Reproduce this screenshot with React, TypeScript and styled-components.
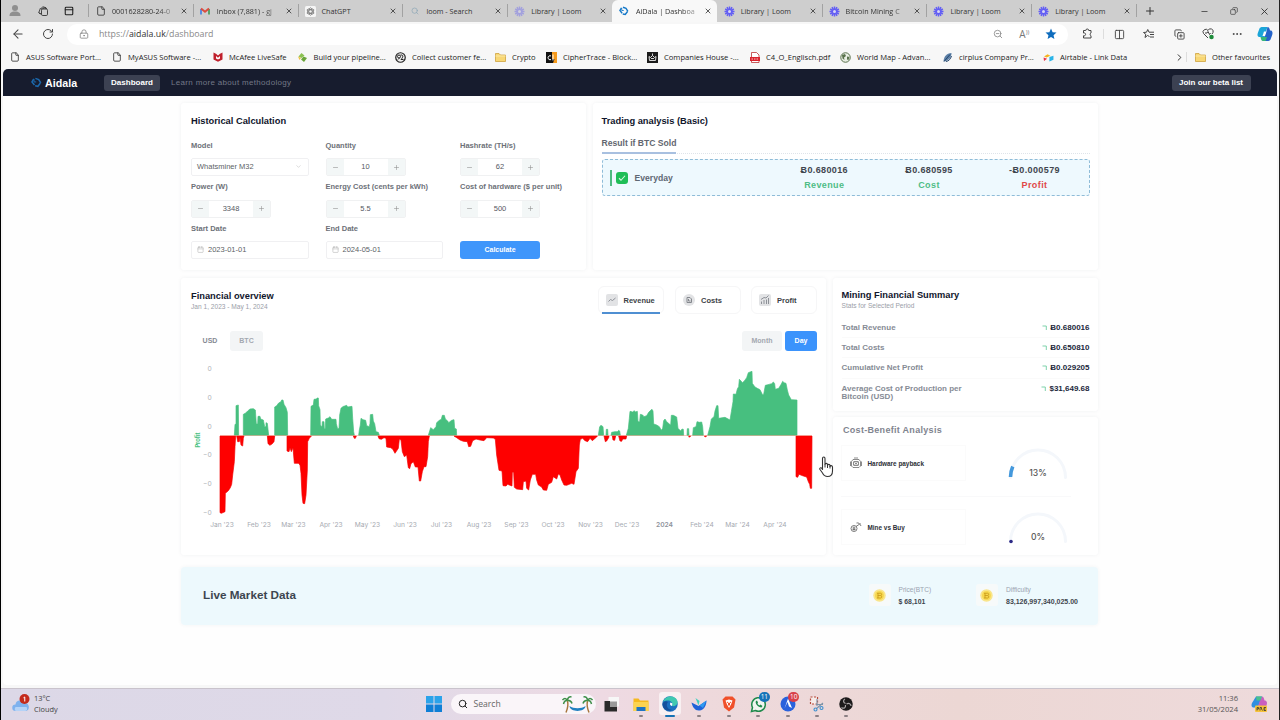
import React from "react";
import styled, { createGlobalStyle } from "styled-components";
import {
  ArrowLeft, RotateCw, LockKeyhole, ZoomOut, Columns2, MoreHorizontal,
  File, Plus, Minus, X, Copy, ChevronRight, ChevronDown, Calendar, Search, PanelTop, CopyPlus,
} from "lucide-react";

const Global = createGlobalStyle`
  * { box-sizing: border-box; }
  html, body { margin: 0; padding: 0; overflow: hidden; background: #000; }
  body { font-family: "Liberation Sans", Arial, sans-serif; }
  svg { display: block; flex: none; }
`;

const ui = `"Open Sans", "Noto Sans", sans-serif`;

/* ---------- window ---------- */
const Screen = styled.div`
  position: relative; width: 1280px; height: 720px; overflow: hidden;
  display: flex; flex-direction: column; background: #f7f7f7;
  border-left: 1px solid #000; border-right: 1px solid #222;
`;
const TabStrip = styled.div`
  height: 22px; flex: none; display: flex; background: #cecece; color: #333;
  font: 7.2px/21px ${ui};
`;
const StripLead = styled.div`
  width: 87px; display: flex; align-items: center; padding-left: 7px; gap: 15px;
`;
const Tab = styled.div<{ $active?: boolean; $line?: boolean }>`
  position: relative; width: 104.8px; height: 22px; display: flex; align-items: center;
  padding: 0 5px 0 7px; gap: 6px;
  background: ${(p) => (p.$active ? "#f8f8f8" : "transparent")};
  border-radius: 6px 6px 0 0;
  &::before {
    content: ""; position: absolute; left: 0; top: 4px; width: 1px; height: 13px;
    background: ${(p) => (p.$line ? "#a2a2a2" : "transparent")};
  }
`;
const TabIcon = styled.span`width: 11px; height: 11px; display: grid; place-items: center; flex: none;`;
const TabLabel = styled.span<{ $fade?: boolean }>`
  flex: 1; white-space: nowrap;
  mask-image: ${(p) => (p.$fade ? "linear-gradient(90deg, #000 75%, rgba(0,0,0,.25) 100%)" : "none")};
`;
const StripTail = styled.div`
  flex: 1; display: flex; align-items: center; justify-content: space-between; padding: 0 9px 0 8px;
  position: relative;
  &::before { content: ""; position: absolute; left: 0; top: 4px; width: 1px; height: 13px; background: #a2a2a2; }
`;
const WindowButtons = styled.div`display: flex; gap: 21px; align-items: center;`;
const Restore = styled(Copy)`transform: scaleX(-1);`;

const Toolbar = styled.div`height: 24px; flex: none; display: flex; align-items: center; color: #444;`;
const NavButtons = styled.div`width: 66px; display: flex; align-items: center; padding-left: 10px; gap: 17px;`;
const AddressField = styled.div`
  width: 1002px; height: 21px; border-radius: 10px; background: #fff; display: flex; align-items: center;
  padding: 0 11px 0 12px; gap: 10px; color: #888; font: 8.8px/20px ${ui};
  b { font-weight: 500; color: #333; }
`;
const Url = styled.span`flex: 1;`;
const FieldIcons = styled.div`display: flex; align-items: center; gap: 16px;`;
const ReadAloud = styled.span`font: 10px/12px ${ui}; color: #777; sup { font-size: 6px; line-height: 0; }`;
const Slot = styled.div<{ $w: number; $pl?: number }>`
  width: ${(p) => p.$w}px; padding-left: ${(p) => p.$pl ?? 0}px; display: flex; justify-content: center; align-items: center;
`;
const Rule = styled.i`width: 1px; height: 10px; background: #ddd;`;

const Bookmarks = styled.div`
  height: 23px; flex: none; display: flex; align-items: center; padding: 0 0 1px 8px;
  font: 7.6px/20px ${ui}; color: #222;
`;
const Bookmark = styled.div<{ $w: number; $ml?: number }>`
  width: ${(p) => p.$w}px; margin-left: ${(p) => p.$ml ?? 0}px;
  display: flex; align-items: center; gap: 6px; white-space: nowrap;
`;
const BookIcon = styled.span`width: 11px; height: 11px; display: grid; place-items: center; flex: none;`;

/* ---------- site ---------- */
const Site = styled.div`
  height: 616px; margin: 0 2px 0 2px; flex: none; border-radius: 5px 5px 4px 4px; overflow: hidden;
  background: #fefefe; display: flex; flex-direction: column;
`;
const SiteNav = styled.nav`
  height: 27px; flex: none; background: #171c2e; display: flex; align-items: center;
  padding: 0 26.5px 0 28px; font-size: 8px; color: #737887;
`;
const Brand = styled.div`
  width: 73px; display: flex; align-items: center; gap: 3px; color: #fff; font-weight: 700; font-size: 10.7px;
`;
const NavPill = styled.span<{ $w: number }>`
  width: ${(p) => p.$w}px; height: 16px; border-radius: 3px; background: #3c4152; color: #fff; font-weight: 700;
  display: flex; align-items: center; justify-content: center; font-size: 8px;
`;
const NavLink = styled.span`flex: 1; padding-left: 11px; letter-spacing: 0.33px; line-height: 16px;`;

const Main = styled.main`width: 917px; margin: 7px 0 0 178px; display: flex; flex-direction: column;`;
const Row = styled.div<{ $gap?: number; $mt?: number }>`
  display: flex; gap: ${(p) => p.$gap ?? 7}px; margin-top: ${(p) => p.$mt ?? 0}px;
`;
const Column = styled.div`display: flex; flex-direction: column; gap: 6px;`;
const Card = styled.section<{ $w: number; $h: number; $pad: string }>`
  width: ${(p) => p.$w}px; height: ${(p) => p.$h}px; padding: ${(p) => p.$pad};
  background: #fff; border-radius: 3px; box-shadow: 0 0 4px rgba(40, 50, 70, 0.06);
`;
const Title = styled.h2<{ $mt?: number }>`
  margin: ${(p) => p.$mt ?? 0}px 0 0; font-size: 9.3px; line-height: 12px; font-weight: 700; color: #10162c; white-space: nowrap;
`;
const Sub = styled.div<{ $mb?: number }>`
  margin-bottom: ${(p) => p.$mb ?? 0}px; font-size: 6.6px; line-height: 9px; color: #9a9ea8; white-space: nowrap;
`;

const FormGrid = styled.div`
  margin-top: 13px; display: grid; grid-template-columns: 134.5px 134.5px 120px; row-gap: 5px;
`;
const FieldLabel = styled.div`
  height: 12px; margin-bottom: 6.5px; line-height: 12px; font-size: 7.5px; font-weight: 700; color: #6d7178; white-space: nowrap;
`;
const Box = styled.div`
  width: 117.5px; height: 18px; border: 1px solid #f0f0f2; border-radius: 2px; display: flex; align-items: center;
  padding: 0 6px 1px 5px; gap: 4px; font-size: 7.5px; color: #5c5f66;
  & > span { flex: 1; }
`;
const Stepper = styled.div`
  width: 80px; height: 18px; border: 1px solid #f0f1f2; border-radius: 2px; display: grid;
  grid-template-columns: 17px 1fr 17px; font-size: 7.5px; line-height: 15.500px; text-align: center; color: #55585f;
`;
const StepButton = styled.span`background: #f3f7f7; color: #909090; display: grid; place-items: center;`;
const Calculate = styled.button`
  width: 80px; height: 18px; margin-top: 18px; padding: 0; border: 0; border-radius: 3px; background: #3f96fb;
  color: #fff; font: 700 7px/18px "Liberation Sans", Arial, sans-serif;
`;

const ResultTabs = styled.div`
  height: 19px; margin-top: 8px; border-bottom: 1px dotted #dfe4ea; display: flex;
`;
const ResultTab = styled.div`
  height: 19px; line-height: 16px; font-size: 8.6px; font-weight: 700; color: #62666f; border-bottom: 2px solid #a8c0e0;
`;
const Strategy = styled.div`
  height: 37px; margin-top: 5px; border: 1px dashed #8fbcd8; border-radius: 3px; background: #eef9fe;
  display: grid; grid-template-columns: 169.500px 104.500px 105px 106px; align-items: center;
`;
const StrategyName = styled.div`
  display: flex; align-items: center; font-size: 8.6px; font-weight: 700; color: #5f6874; padding-left: 7.500px;
  &::before { content: ""; width: 1.500px; height: 16px; background: #4dbb80; margin-right: 4px; }
`;
const Check = styled.span`
  width: 12px; height: 12px; border-radius: 3px; background: #1fbe57; display: grid; place-items: center; margin-right: 7px;
`;
const Metric = styled.div<{ $tone: string }>`
  text-align: center; font-size: 9px; line-height: 14.500px; font-weight: 700; letter-spacing: 0.38px; color: #41464f;
  em { display: block; font-style: normal; color: ${(p) => p.$tone}; }
`;

const Between = styled.div`display: flex; justify-content: space-between; align-items: flex-start;`;
const Kinds = styled.div`display: flex; gap: 10px;`;
const Kind = styled.div<{ $on?: boolean }>`
  position: relative; width: 66px; height: 28px; margin-right: ${(p) => (p.$on ? 1.5 : 0)}px;
  border: 1px solid #f6f6f7; border-radius: 6px; display: flex; align-items: center;
  gap: 6px; padding-left: 7px; font-size: 7.5px; font-weight: 700; color: #3c3f46;
  &::after {
    content: ""; position: absolute; left: 3px; right: 3px; bottom: -1px; height: 2px;
    background: ${(p) => (p.$on ? "#4f8fd2" : "transparent")};
  }
`;
const KindIcon = styled.span<{ $round?: boolean }>`
  width: 12px; height: 12px; border-radius: ${(p) => (p.$round ? "50%" : "2px")}; background: #e2e3e5;
  display: grid; place-items: center;
`;
const Toggle = styled.span<{ $w: number; $kind: "plain" | "soft" | "primary" }>`
  width: ${(p) => p.$w}px; height: 20.5px; border-radius: 3px; display: grid; place-items: center;
  font-size: 7px; font-weight: 700;
  background: ${(p) => ({ plain: "transparent", soft: "#f3f5f6", primary: "#3b93fc" })[p.$kind]};
  color: ${(p) => ({ plain: "#858a93", soft: "#a3a8b0", primary: "#fff" })[p.$kind]};
`;
const ToggleRow = styled.div`display: flex; justify-content: space-between; margin-top: 16.500px; padding: 0 0 0 1px;`;
const ToggleGroup = styled.div<{ $gap: number }>`display: flex; gap: ${(p) => p.$gap}px;`;
const ChartSvg = styled.svg`margin: 5px 0 0 -1px; text { font-family: Inter, sans-serif; }`;

const StatRow = styled.div<{ $last?: boolean }>`
  height: ${(p) => (p.$last ? 24 : 20.4)}px; display: flex; justify-content: space-between; padding-top: 6px;
  font-size: 8px; line-height: 8.4px; font-weight: 700; color: #868b95;
  border-bottom: 1px solid ${(p) => (p.$last ? "transparent" : "#fafafa")};
`;
const StatValue = styled.span`display: flex; gap: 3px; color: #22283c; white-space: nowrap;`;
const BenefitTitle = styled.h3`
  margin: 0 0 0 2px; font-size: 9px; line-height: 12px; letter-spacing: 0.3px; font-weight: 700; color: #7f848f;
`;
const Benefit = styled.div<{ $h: number; $mt: number; $line?: boolean }>`
  height: ${(p) => p.$h}px; margin-top: ${(p) => p.$mt}px; display: flex; justify-content: space-between;
  border-bottom: 1px solid ${(p) => (p.$line ? "#f9f9fa" : "transparent")};
`;
const BenefitBox = styled.div`
  width: 125px; height: 36px; border: 1px solid #fbfbfb; display: flex; align-items: center; gap: 5.500px; padding-left: 8px;
  font-size: 6.4px; font-weight: 700; color: #2c2f36;
`;
const GaugeSvg = styled.svg`margin-top: 1.500px;`;
const Live = styled.section`
  height: 58px; margin-top: 12px; border-radius: 4px; background: #edf9fd; display: flex; align-items: center;
  padding: 0 20px 2px 22px; box-shadow: 0 0 4px rgba(40, 50, 70, 0.05);
`;
const LiveTitle = styled.h2`margin: 0; flex: 1; font-size: 11.7px; line-height: 14px; color: #3d4650;`;
const Quote = styled.div<{ $w: number }>`width: ${(p) => p.$w}px; display: flex; align-items: center; gap: 8px;`;
const Coin = styled.span`
  width: 22px; height: 22px; border-radius: 3px; background: #f7fafa; display: grid; place-items: center;
`;
const QuoteText = styled.div<{ $size: number }>`
  padding-top: 1px; font-size: 6.6px; line-height: 12px; color: #9ba3b0; white-space: nowrap;
  b { display: block; font-size: ${(p) => p.$size}px; color: #3f464e; }
`;

/* ---------- taskbar ---------- */
const Taskbar = styled.footer`
  height: 32px; margin-top: 3px; flex: none; border-top: 1px solid #c9c3cc; display: flex; align-items: center; color: #444;
  padding-bottom: 1px;
  background: linear-gradient(90deg, #dcd8e7 0%, #dfd9e8 30%, #eedae3 47%, #eed9dc 55%, #ecd7d4 75%, #eedadb 100%);
  font-family: ${ui};
`;
const Weather = styled.div`
  width: 424.500px; display: flex; align-items: center; padding: 0 0 1px 11px; gap: 4px; font-size: 7.4px; line-height: 11px;
`;
const SearchPill = styled.div`
  width: 145px; height: 20px; margin-left: 9px; border-radius: 10px; background: #faf5f9; display: flex; align-items: center;
  padding: 0 3px 0 7px; gap: 6px; font-size: 8.6px; color: #666; span { flex: 1; }
`;
const Apps = styled.div`flex: 1; display: flex; padding-left: 1px;`;
const AppButton = styled.div<{ $hot?: boolean; $dot?: boolean }>`
  position: relative; width: 29.4px; height: 30px; display: grid; place-items: center;
  &::before {
    content: ""; position: absolute; left: 4px; top: 3px; width: 22px; height: 23px; border-radius: 3px;
    background: ${(p) => (p.$hot ? "rgba(255,255,255,.6)" : "transparent")};
  }
  &::after {
    content: ""; position: absolute; left: 50%; bottom: 2px; height: 2px; border-radius: 1px; transform: translateX(-50%);
    width: ${(p) => (p.$hot ? 10 : 4)}px; background: ${(p) => (p.$hot ? "#1672b4" : p.$dot ? "#8b8084" : "transparent")};
  }
  svg { position: relative; }
`;
const Badge = styled.span<{ $bg: string }>`
  position: absolute; right: 3px; top: 3px; min-width: 11px; height: 10px; border-radius: 5px; background: ${(p) => p.$bg};
  color: #fff; font-size: 6.5px; line-height: 10px; text-align: center;
`;
const Clock = styled.div`text-align: right; font-size: 7.6px; line-height: 11px; padding-bottom: 1px; margin-right: 13px; color: #555;`;
const Tray = styled.div`margin-right: 11px;`;
const Cursor = styled.svg`position: absolute; left: 816.500px; top: 456px;`;

/* ---------- drawings ---------- */
const Avatar = () => (
  <svg width="14" height="14" viewBox="0 0 28 28"><circle cx="14" cy="8" r="6" fill="#8f8f8f" /><path d="M3 24c0-6 3-9 11-9s11 3 11 9z" fill="#8f8f8f" /></svg>
);
const Workspaces = () => (
  <svg width="12" height="12" viewBox="0 0 24 24" fill="none" stroke="#333" strokeWidth="1.800">
    <rect x="9" y="8" width="12" height="13" rx="2.500" /><path d="M9 18l-4-1.500a2 2 0 01-1-2.500L7 6M7 18l-4-3M9 9l1-4c.4-1 1.400-1.600 2.500-1.300L18 5.500l1 2.500M12 8V6h6v2" />
  </svg>
);
const PuzzleIcon = () => (
  <svg width="12" height="12" viewBox="0 0 24 24" fill="none" stroke="#444" strokeWidth="2">
    <path d="M5 5h4.500a3 3 0 016 0H20v5a3 3 0 000 5.500V20H5v-4.500a3 3 0 100-5.500z" />
  </svg>
);
const LoomIcon = ({ faint }: { faint?: boolean }) => (
  <svg width="11" height="11" viewBox="-11 -11 22 22" opacity={faint ? 0.4 : 1}>
    {[0, 30, 60, 90, 120, 150].map((a) => (
      <line key={a} y1="-10" y2="10" stroke="#625df5" strokeWidth="3" transform={`rotate(${a})`} />
    ))}
    <circle r="5.5" fill="#625df5" /><circle r="3" fill="#d8d6f4" />
  </svg>
);
const AidalaIcon = ({ size = 10, color = "#1478c8" }: { size?: number; color?: string }) => (
  <svg width={size} height={size} viewBox="0 0 20 20" fill="none" stroke={color} strokeWidth="2.800">
    <path d="M5 3.500 1.800 9l4.500 5.500M8 2.500l6 2.200 3.800 6M17 11l-4.500 6-5-1" />
    <path d="M5.500 4v5h4" strokeWidth="1.800" />
  </svg>
);
const GmailIcon = () => (
  <svg width="10" height="8" viewBox="0 0 20 16" fill="none" strokeWidth="4">
    <path d="M2 15V4" stroke="#5a8de0" /><path d="M18 15V4" stroke="#5aa36a" /><path d="M2 3l8 6.500L18 3" stroke="#dd4b3e" />
  </svg>
);
const GptIcon = () => (
  <svg width="11" height="11" viewBox="-11 -11 22 22"><rect x="-11" y="-11" width="22" height="22" rx="3" fill="#f5f5f5" />
    {[0, 60, 120].map((a) => <ellipse key={a} rx="3.400" ry="7.500" fill="none" stroke="#777" strokeWidth="1.600" transform={`rotate(${a})`} />)}
  </svg>
);
const FolderIcon = () => (
  <svg width="11" height="10" viewBox="0 0 22 20"><path d="M1 3h7l3 3h10v13H1z" fill="#f8d775" stroke="#c99a2e" strokeWidth="1.400" /><path d="M1 8h20" stroke="#fbe9a8" strokeWidth="2" /></svg>
);
const FileIcon = () => <File size={10} strokeWidth={2} color="#333" />;
const McAfeeIcon = () => (
  <svg width="10" height="10" viewBox="0 0 20 20"><path d="M1 1l5 2.500L10 7l4-3.500L19 1v14l-9 4.500L1 15z" fill="#c0202c" /><path d="M6 8l4 3.500L14 8v5l-4 2-4-2z" fill="#fff" /></svg>
);
const PipelineIcon = () => (
  <svg width="11" height="11" viewBox="0 0 22 22"><path d="M9 2l6 5-6 5-6-3z" fill="#8cc152" /><path d="M13 9l7 3-6 8-6-5z" fill="#6aa53a" /><path d="M2 9l6 3-3 4z" fill="#f0c040" /></svg>
);
const CollectIcon = () => (
  <svg width="11" height="11" viewBox="0 0 22 22"><circle cx="11" cy="11" r="9.500" fill="#eee" stroke="#222" strokeWidth="2.400" /><circle cx="8" cy="9" r="3" fill="none" stroke="#222" strokeWidth="2" /><path d="M11 6c6-1 6 4 1 9h5M6 15l3-3" fill="none" stroke="#222" strokeWidth="2" /></svg>
);
const CipherIcon = () => (
  <svg width="11" height="11" viewBox="0 0 22 22"><rect width="22" height="22" fill="#111" /><path d="M12 0h10v22h-8l3-8h-5z" fill="#f59a1c" /><path d="M10 8a4 4 0 100 7M14 5v12" fill="none" stroke="#fff" strokeWidth="2" /></svg>
);
const HouseIcon = () => (
  <svg width="11" height="11" viewBox="0 0 22 22"><rect width="22" height="22" fill="#1c1c1c" /><path d="M4 9l3 2 4-4 4 4 3-2-1 8H5z" fill="none" stroke="#eee" strokeWidth="1.800" /><path d="M11 3v4M8 13h6" stroke="#eee" strokeWidth="1.800" /></svg>
);
const PdfIcon = () => (
  <svg width="10" height="11" viewBox="0 0 20 22"><path d="M3 1h10l5 5v15H3z" fill="#fff" stroke="#b33" strokeWidth="1.600" /><rect y="10" width="20" height="8" fill="#d9232e" /><path d="M3 14h14" stroke="#fbb" strokeWidth="2" strokeDasharray="3 2" /></svg>
);
const WorldIcon = () => (
  <svg width="11" height="11" viewBox="0 0 22 22"><circle cx="11" cy="11" r="9.500" fill="#e9eee4" stroke="#58714b" strokeWidth="2" /><path d="M4 6l6-2 2 4-4 3 1 5-4-3zM14 9l5 1-2 6-3-1z" fill="#58714b" /></svg>
);
const CirplusIcon = () => (
  <svg width="11" height="11" viewBox="0 0 22 22"><path d="M3 18C4 9 9 3 19 2c0 8-5 14-13 17z" fill="#5b7fa6" /><path d="M4 19L16 5M8 19c6-1 9-5 11-11" stroke="#27476d" strokeWidth="2" fill="none" /></svg>
);
const AirtableIcon = () => (
  <svg width="11" height="9" viewBox="0 0 24 20"><path d="M2 8l8-5 6 3-8 4z" fill="#f7b520" /><path d="M14 9l9-3v9l-9 4z" fill="#2ab4e8" /><path d="M1 10l8 3-7 5z" fill="#e8344c" /></svg>
);
const BookList = [
  { icon: <FileIcon />, label: "ASUS Software Port...", w: 102 },
  { icon: <FileIcon />, label: "MyASUS Software -...", w: 101 },
  { icon: <McAfeeIcon />, label: "McAfee LiveSafe", w: 84.5 },
  { icon: <PipelineIcon />, label: "Build your pipeline...", w: 98.5 },
  { icon: <CollectIcon />, label: "Collect customer fe...", w: 100 },
  { icon: <FolderIcon />, label: "Crypto", w: 51 },
  { icon: <CipherIcon />, label: "CipherTrace - Block...", w: 101 },
  { icon: <HouseIcon />, label: "Companies House -...", w: 102 },
  { icon: <PdfIcon />, label: "C4_O_Englisch.pdf", w: 91 },
  { icon: <WorldIcon />, label: "World Map - Advan...", w: 102 },
  { icon: <CirplusIcon />, label: "cirplus Company Pr...", w: 101 },
  { icon: <AirtableIcon />, label: "Airtable - Link Data", w: 130 },
];
const TabList = [
  { icon: <FileIcon />, label: "0001628280-24-0", line: true, fade: true },
  { icon: <GmailIcon />, label: "Inbox (7,881) - gj", line: true, fade: true },
  { icon: <GptIcon />, label: "ChatGPT", line: true },
  { icon: <Search size={8} color="#8aa5b5" />, label: "loom - Search", line: true },
  { icon: <LoomIcon faint />, label: "Library | Loom", line: true },
  { icon: <AidalaIcon />, label: "AiDala | Dashboa", active: true, fade: true },
  { icon: <LoomIcon />, label: "Library | Loom" },
  { icon: <LoomIcon />, label: "Bitcoin Mining C", line: true, fade: true },
  { icon: <LoomIcon />, label: "Library | Loom", line: true },
  { icon: <LoomIcon />, label: "Library | Loom", line: true },
];

/* Outlines are in thirds of a pixel; the zero line sits at 482. */
const gains = [
  "163,481 165,448 168,448 168,392 175,390 176,481",
  "190,481 190,418 196,415 203,408 210,402 220,401 226,405 229,447 233,447 234,424 240,424 242,432 250,435 254,455 258,455 258,443 262,445 266,481",
  "284,481 284,396 290,392 296,384 303,380 305,375 309,375 312,388 318,398 322,412 323,481",
  "392,481 393,394 400,390 402,373 410,372 411,369 415,369 416,392 420,404 421,450 426,456 427,440 432,440 433,462 436,460 437,432 445,429 450,425 455,433 468,433 469,446 473,462 477,460 479,420 483,400 488,395 500,391 503,396 516,394 518,430 521,470 523,481",
  "536,481 538,465 541,450 543,430 549,434 557,436 560,452 568,455 570,445 571,419 578,418 580,438 584,446 588,470 595,472 598,481",
  "745,481 749,468 752,458 760,464 768,455 770,443 778,436 784,433 787,421 793,421 796,432 803,438 806,443 815,436 822,434 824,460 829,462 830,481",
  "1255,481 1259,455 1263,451 1269,455 1271,481",
  "1278,481 1279,463 1283,463 1284,481",
  "1293,481 1295,472 1305,470 1312,470 1316,466 1319,468 1321,481",
  "1339,481 1345,460 1348,430 1350,409 1358,411 1363,407 1366,411 1372,409 1374,440 1379,440 1381,418 1388,420 1392,425 1400,422 1406,412 1412,406 1416,403 1419,408 1421,447 1430,450 1438,455 1444,466 1448,460 1451,437 1455,432 1460,440 1468,447 1472,450 1474,421 1480,421 1490,426 1494,460 1502,468 1506,462 1510,463 1511,481",
  "1521,481 1522,461 1526,461 1527,481",
  "1538,481 1540,458 1548,455 1551,440 1558,442 1565,441 1568,455 1570,481",
  "1583,481 1590,455 1594,432 1602,425 1605,408 1610,392 1614,392 1616,430 1635,427 1650,435 1654,410 1659,380 1660,357 1668,358 1672,342 1676,335 1678,313 1683,318 1687,323 1693,318 1700,308 1705,293 1716,289 1717,325 1725,336 1732,340 1740,344 1748,360 1751,358 1756,331 1764,329 1775,326 1780,321 1784,326 1786,343 1796,340 1804,327 1808,319 1812,323 1818,325 1822,345 1826,360 1834,374 1851,375 1851,481",
];
const losses = [
  "120,483 120,713 124,715 135,710 136,655 145,647 151,638 155,628 158,600 163,560 165,515 167,483",
  "170,483 173,500 178,500 180,488 183,510 188,513 190,490 192,483",
  "262,483 264,505 269,511 276,507 282,500 284,483",
  "321,483 321,528 327,530 330,518 334,530 339,518 343,565 355,565 360,570 363,595 366,660 369,685 374,686 378,660 382,585 383,500 388,490 394,483",
  "520,483 523,490 526,490 529,483",
  "594,483 597,491 604,493 612,488 618,490 620,516 632,518 638,522 645,535 655,520 658,492 663,495 667,530 673,545 680,540 685,578 689,581 693,566 700,560 706,576 714,576 718,618 722,618 727,590 732,575 738,575 743,545 745,500 748,483",
  "822,483 830,488 840,495 850,499 862,500 866,515 872,514 878,497 888,492 900,495 912,497 920,488 940,489 946,493 950,540 957,586 966,588 969,632 978,633 983,628 996,633 997,592 1001,592 1003,637 1010,642 1028,644 1030,620 1038,618 1040,640 1046,645 1051,615 1057,598 1067,598 1070,615 1075,630 1085,636 1090,645 1100,646 1105,628 1115,622 1120,605 1130,612 1135,597 1140,600 1145,615 1152,630 1160,631 1175,625 1182,628 1188,590 1195,580 1198,510 1201,493 1208,490 1215,497 1223,500 1230,490 1237,497 1250,486 1252,483",
  "1272,483 1276,500 1280,498 1286,488 1287,483",
  "1297,483 1299,495 1304,496 1307,483",
  "1316,483 1320,498 1325,499 1328,492 1338,492 1340,483",
  "1526,483 1528,487 1532,483",
  "1573,483 1576,486 1580,483",
  "1848,483 1848,605 1853,607 1857,598 1870,603 1880,606 1885,620 1889,628 1891,640 1895,640 1896,483",
];
const months: [number, string][] = [
  [222, "Jan '23"], [259, "Feb '23"], [293.5, "Mar '23"], [331, "Apr '23"], [367.5, "May '23"], [405, "Jun '23"],
  [441.5, "Jul '23"], [479, "Aug '23"], [516.5, "Sep '23"], [553, "Oct '23"], [590.5, "Nov '23"], [627, "Dec '23"],
  [664.5, "2024"], [702, "Feb '24"], [737.5, "Mar '24"], [775, "Apr '24"],
];
const levels: [number, string][] = [[282, "0"], [368, "0"], [454, "0"], [540, "−0"], [626, "−0"], [712, "−0"]];

const Chart = () => (
  <ChartSvg width="630" height="190" viewBox="30 243 1890 570">
    <g fill="#47bf7f" stroke="#47bf7f" strokeWidth="2" strokeLinejoin="round">{gains.map((p) => <polygon key={p} points={p} />)}</g>
    <g fill="#fe0000" stroke="#f20000" strokeWidth="2" strokeLinejoin="round">{losses.map((p) => <polygon key={p} points={p} />)}</g>
    <path d="M120 482H1896" stroke="#f08a70" strokeWidth="2" opacity=".8" />
    {levels.map(([y, t]) => <text key={y} x="95" y={y + 7} textAnchor="end" fontSize="20" fill="#b0b3b8">{t}</text>)}
    {months.map(([x, t]) => (
      <text key={x} x={(x - 180) * 3} y="757" textAnchor="middle" fontSize="20" fill={t === "2024" ? "#8d929b" : "#a6aab1"}
        fontWeight={t === "2024" ? 600 : 400}>{t}</text>
    ))}
    <text transform="translate(59 495) rotate(-90)" textAnchor="middle" fontSize="17" fontWeight="700" fill="#47bf7f">Profit</text>
  </ChartSvg>
);

const Gauge = ({ value }: { value: number }) => {
  const a = Math.PI * (value / 100);
  return (
    <GaugeSvg width="64" height="34" viewBox="0 0 64 34">
      <path d="M3.500 30.500A27.500 27.500 0 0 1 58.500 30.500" fill="none" stroke="#f4f7fb" strokeWidth="3" strokeLinecap="round" />
      {value > 0 ? (
        <path d={`M3.500 30A27.500 27.500 0 0 1 ${31 - 27.5 * Math.cos(a)} ${30.5 - 27.5 * Math.sin(a)}`} fill="none" stroke="#4398dc" strokeWidth="3.600" />
      ) : <circle cx="4" cy="30.500" r="1.800" fill="#2d2a86" />}
      <text x="31" y="29" textAnchor="middle" fontFamily="Inter, sans-serif" fontSize="8.600" fontWeight="500" fill="#555">{value}%</text>
    </GaugeSvg>
  );
};

const CornerArrow = () => (
  <svg width="5" height="8" viewBox="0 0 5 8"><path d="M.500 2H4.300V6" fill="none" stroke="#6fcda2" strokeWidth=".9" /></svg>
);
const Bitcoin = () => (
  <svg width="13" height="13" viewBox="0 0 26 26"><circle cx="13" cy="13" r="12.500" fill="#f9e58b" /><circle cx="13" cy="13" r="9" fill="#f7d84f" />
    <path d="M8 8.500h7.500a2.300 2.300 0 010 4.500H9.500m6 0a2.600 2.600 0 010 5H8M10 8.500v9.500" fill="none" stroke="#c99a1a" strokeWidth="1.700" /></svg>
);

const NumberField = ({ label, value }: { label: string; value: string }) => (
  <div>
    <FieldLabel>{label}</FieldLabel>
    <Stepper>
      <StepButton><Minus size={7} /></StepButton>{value}<StepButton><Plus size={7} /></StepButton>
    </Stepper>
  </div>
);
const DateField = ({ label, value }: { label: string; value: string }) => (
  <div><FieldLabel>{label}</FieldLabel><Box><Calendar size={7} color="#b5b5b5" /><span>{value}</span></Box></div>
);

export default function App() {
  return (
    <Screen>
      <Global />
      <TabStrip>
        <StripLead>
          <Avatar />
          <Workspaces />
          <PanelTop size={10} color="#222" strokeWidth={2.6} />
        </StripLead>
        {TabList.map((t, i) => (
          <Tab key={i} $active={t.active} $line={t.line}>
            <TabIcon>{t.icon}</TabIcon><TabLabel $fade={t.fade}>{t.label}</TabLabel><X size={8} color="#333" strokeWidth={2.4} />
          </Tab>
        ))}
        <StripTail>
          <Plus size={12} color="#333" />
          <WindowButtons><Minus size={9} /><Restore size={8} /><X size={11} /></WindowButtons>
        </StripTail>
      </TabStrip>

      <Toolbar>
        <NavButtons><ArrowLeft size={14} strokeWidth={1.8} /><RotateCw size={12} strokeWidth={2} /></NavButtons>
        <AddressField>
          <LockKeyhole size={10} />
          <Url>https://<b>aidala.uk</b>/dashboard</Url>
          <FieldIcons>
            <ZoomOut size={10} />
            <ReadAloud>A<sup>))</sup></ReadAloud>
            <svg width="12" height="12" viewBox="0 0 24 24"><path d="M12 1l3.200 7.300 7.800.8-5.900 5.300 1.700 7.800L12 18.200 5.200 22.200l1.700-7.800L1 9.100l7.800-.8z" fill="#0f6cbd" /></svg>
          </FieldIcons>
        </AddressField>
        <Slot $w={35} $pl={3}><PuzzleIcon /></Slot>
        <Rule />
        <Slot $w={30}><Columns2 size={11} /></Slot>
        <Slot $w={30}>
          <svg width="12" height="11" viewBox="0 0 24 22" fill="none" stroke="#444" strokeWidth="2"><path d="M13 15l-4-2-5 4 1.500-6.500L1 7l6-.6L9.500 1 12 6.400h10M14 11h8M14 16h8" /></svg>
        </Slot>
        <Slot $w={30}><CopyPlus size={11} /></Slot>
        <Slot $w={29}>
          <svg width="13" height="12" viewBox="0 0 26 24"><path d="M12 20L3 11a5 5 0 019-6 5 5 0 0110 4l-2 3M6 10h4l2-3 3 6 2-3" fill="none" stroke="#444" strokeWidth="2" /><circle cx="19" cy="18" r="4.500" fill="#1e8b3a" /></svg>
        </Slot>
        <Slot $w={28}><MoreHorizontal size={12} /></Slot>
        <Slot $w={28}>
          <svg width="16" height="16" viewBox="0 0 32 32"><path d="M11 2h10l-7 20H6c-5 0-6-4-4-9l3-8c1-2 3-3 6-3z" fill="#1ba5d8" /><path d="M21 2c3 0 4 3 5 7h2c3 1 4 5 2 10l-3 8c-1 2-4 3-6 3H11l8-20z" fill="#2463c9" /><path d="M10 22h10l-3 8h-5c-3 0-4-3-5-8z" fill="#35b778" /><path d="M14 11h5l-3 9h-5z" fill="#fff" /></svg>
        </Slot>
      </Toolbar>

      <Bookmarks>
        {BookList.map((b) => <Bookmark key={b.label} $w={b.w}><BookIcon>{b.icon}</BookIcon>{b.label}</Bookmark>)}
        <Slot $w={13}><ChevronRight size={11} /></Slot>
        <Rule />
        <Bookmark $w={80} $ml={8}><BookIcon><FolderIcon /></BookIcon>Other favourites</Bookmark>
      </Bookmarks>

      <Site>
        <SiteNav>
          <Brand><AidalaIcon size={11} color="#1b69ad" />Aidala</Brand>
          <NavPill $w={56}>Dashboard</NavPill>
          <NavLink>Learn more about methodology</NavLink>
          <NavPill $w={79}>Join our beta list</NavPill>
        </SiteNav>

        <Main>
          <Row>
            <Card $w={405} $h={167} $pad="11.500px 0 0 10px">
              <Title>Historical Calculation</Title>
              <FormGrid>
                <div>
                  <FieldLabel>Model</FieldLabel>
                  <Box><span>Whatsminer M32</span><ChevronDown size={7} color="#c4c4c4" /></Box>
                </div>
                <NumberField label="Quantity" value="10" />
                <NumberField label="Hashrate (TH/s)" value="62" />
                <NumberField label="Power (W)" value="3348" />
                <NumberField label="Energy Cost (cents per kWh)" value="5.5" />
                <NumberField label="Cost of hardware ($ per unit)" value="500" />
                <DateField label="Start Date" value="2023-01-01" />
                <DateField label="End Date" value="2024-05-01" />
                <Calculate>Calculate</Calculate>
              </FormGrid>
            </Card>
            <Card $w={505} $h={167} $pad="12px 8.500px 0 8.500px">
              <Title>Trading analysis (Basic)</Title>
              <ResultTabs><ResultTab>Result if BTC Sold</ResultTab></ResultTabs>
              <Strategy>
                <StrategyName>
                  <Check><svg width="8" height="8" viewBox="0 0 16 16"><path d="M2 8.500l4 4 8-9" fill="none" stroke="#d9f7e3" strokeWidth="2.200" /></svg></Check>
                  Everyday
                </StrategyName>
                <Metric $tone="#4fbd86">Ƀ0.680016<em>Revenue</em></Metric>
                <Metric $tone="#4fbd86">Ƀ0.680595<em>Cost</em></Metric>
                <Metric $tone="#e04848">-Ƀ0.000579<em>Profit</em></Metric>
              </Strategy>
            </Card>
          </Row>

          <Row $mt={8}>
            <Card $w={645} $h={277} $pad="8px 9px 0 10px">
              <Between>
                <div><Title $mt={4}>Financial overview</Title><Sub>Jan 1, 2023 - May 1, 2024</Sub></div>
                <Kinds>
                  <Kind $on>
                    <KindIcon><svg width="8" height="8" viewBox="0 0 16 16"><path d="M1 11l4-4 4 2 6-5" fill="none" stroke="#85888e" strokeWidth="1.800" /></svg></KindIcon>Revenue
                  </Kind>
                  <Kind>
                    <KindIcon $round><svg width="8" height="8" viewBox="0 0 16 16"><path d="M4 3h6l3 3v7H4zM7 6v4h4" fill="none" stroke="#85888e" strokeWidth="2" /></svg></KindIcon>Costs
                  </Kind>
                  <Kind>
                    <KindIcon><svg width="10" height="10" viewBox="0 0 20 20"><path d="M3 18v-5M8 18v-8M13 18V9M17 18V6M2 9l6-4 4 1 5-5" fill="none" stroke="#85888e" strokeWidth="1.800" /></svg></KindIcon>Profit
                  </Kind>
                </Kinds>
              </Between>
              <ToggleRow>
                <ToggleGroup $gap={2}><Toggle $w={36} $kind="plain">USD</Toggle><Toggle $w={33} $kind="soft">BTC</Toggle></ToggleGroup>
                <ToggleGroup $gap={3}><Toggle $w={40} $kind="soft">Month</Toggle><Toggle $w={32} $kind="primary">Day</Toggle></ToggleGroup>
              </ToggleRow>
              <Chart />
            </Card>
            <Column>
              <Card $w={265} $h={133} $pad="10.500px 8.500px 0 8.500px">
                <Title>Mining Financial Summary</Title>
                <Sub $mb={8}>Stats for Selected Period</Sub>
                <StatRow>Total Revenue<StatValue><CornerArrow />Ƀ0.680016</StatValue></StatRow>
                <StatRow>Total Costs<StatValue><CornerArrow />Ƀ0.650810</StatValue></StatRow>
                <StatRow>Cumulative Net Profit<StatValue><CornerArrow />Ƀ0.029205</StatValue></StatRow>
                <StatRow $last><span>Average Cost of Production per<br />Bitcoin (USD)</span><StatValue><CornerArrow />$31,649.68</StatValue></StatRow>
              </Card>
              <Card $w={265} $h={138} $pad="7px 27px 0 8px">
                <BenefitTitle>Cost-Benefit Analysis</BenefitTitle>
                <Benefit $h={52} $mt={9} $line>
                  <BenefitBox>
                    <svg width="12" height="12" viewBox="0 0 24 24" fill="none" stroke="#666" strokeWidth="1.500"><path d="M6 5h12l3 4v9l-3 3H6l-3-3V9zM8 2h8M1 9v9M23 9v9" /><rect x="7" y="9" width="10" height="8" rx="1" /><path d="M9 11l6 4M15 11l-6 4" /></svg>
                    Hardware payback
                  </BenefitBox>
                  <Gauge value={13} />
                </Benefit>
                <Benefit $h={40} $mt={12}>
                  <BenefitBox>
                    <svg width="12" height="12" viewBox="0 0 24 24" fill="none" stroke="#666" strokeWidth="1.700"><circle cx="8" cy="15" r="6" /><path d="M5 14h6M5 17h6M8 11v8M12 11l9-6M13 4c4-1 7 1 9 6" /></svg>
                    Mine vs Buy
                  </BenefitBox>
                  <Gauge value={0} />
                </Benefit>
              </Card>
            </Column>
          </Row>

          <Live>
            <LiveTitle>Live Market Data</LiveTitle>
            <Quote $w={107.5}><Coin><Bitcoin /></Coin><QuoteText $size={6.9}>Price(BTC)<b>$ 68,101</b></QuoteText></Quote>
            <Quote $w={102}><Coin><Bitcoin /></Coin><QuoteText $size={7}>Difficulty<b>83,126,997,340,025.00</b></QuoteText></Quote>
          </Live>
        </Main>
      </Site>

      <Taskbar>
        <Weather>
          <svg width="18" height="19" viewBox="0 0 36 38"><path d="M7 34a6.500 6.500 0 010-13 9 9 0 0117-3 8 8 0 013 16z" fill="#7fb2ee" /><path d="M7 34a6 6 0 010-8h22a5 5 0 01-2 8z" fill="#b5d3f7" /><circle cx="25" cy="10" r="10" fill="#c42b1c" /><path d="M23 7.500l2.500-1.500v9" fill="none" stroke="#fff" strokeWidth="2" /></svg>
          <div>13°C<br />Cloudy</div>
        </Weather>
        <svg width="16" height="16" viewBox="0 0 32 32"><path d="M0 0h15v15H0zM17 0h15v15H17z" fill="#2ba3ea" /><path d="M0 17h15v15H0zM17 17h15v15H17z" fill="#0f7fd6" /></svg>
        <SearchPill>
          <Search size={10} color="#222" strokeWidth={2.4} /><span>Search</span>
          <svg width="31" height="18" viewBox="0 0 62 36" fill="none"><path d="M11 12c2 8 0 16-3 23M51 12c-2 8 0 16 3 23" stroke="#a8763f" strokeWidth="3" /><path d="M11 11C8 5 4 6 1 10M11 11C7 10 4 13 3 18M11 11c0-6 4-8 8-7M11 11c5-1 8 2 9 6M51 11c3-6 7-5 10-1M51 11c4-1 7 2 8 7M51 11c0-6-4-8-8-7M51 11c-5-1-8 2-9 6" stroke="#3f8f4a" strokeWidth="3" /><path d="M15 22c8 6 24 6 32 0-1 13-31 13-32 0z" fill="#1f7fc0" /></svg>
        </SearchPill>
        <Apps>
          <AppButton><svg width="15" height="15" viewBox="0 0 30 30"><path d="M9 0h21v19H9z" fill="#f7f7f7" /><path d="M1 8h11v12h14v9H1z" fill="#2a2a2a" /><path d="M12 9h14v11H12z" fill="#999" /></svg></AppButton>
          <AppButton $dot><svg width="16" height="15" viewBox="0 0 32 30"><path d="M1 3h10l3 4h17v21H1z" fill="#f5b91f" /><path d="M1 10h30v18H1z" fill="#fbd351" /><path d="M7 20h18v8H7z" fill="#1d74c4" /></svg></AppButton>
          <AppButton $hot><svg width="16" height="16" viewBox="0 0 32 32"><circle cx="16" cy="16" r="15.500" fill="#1b6fc0" /><path d="M2 12C5 3 13 0 19 1c8 1 13 7 12 13-1 5-6 7-11 6 3-6-2-11-8-11-5 0-8 1-10 3z" fill="#3fc8b0" /><path d="M12 12c-5 5-2 15 8 16-9 4-18-1-19-11 1-6 7-8 11-5z" fill="#154f9c" /><path d="M20 20c-4-1-5-4-3-7l4 2z" fill="#fff" /></svg></AppButton>
          <AppButton $dot><svg width="16" height="15" viewBox="0 0 32 30"><path d="M9 2l8 6-2 9z" fill="#3ed0c0" /><path d="M1 11l14 7L31 7c0 10-5 19-14 20C8 28 3 20 1 11z" fill="#1f63d8" /><path d="M17 17L31 7l-7 15z" fill="#2f9af0" /></svg></AppButton>
          <AppButton $dot><svg width="14" height="16" viewBox="0 0 28 32"><path d="M7 1h14l6 6-3 16-10 8L4 23 1 7z" fill="#f0502a" /><path d="M7 9l7-2 7 2-3 8-4 7-4-7z" fill="#fff" /><path d="M10 12l3 2v5M18 12l-3 2v5" stroke="#f0502a" strokeWidth="2" fill="none" /></svg></AppButton>
          <AppButton $dot><svg width="17" height="17" viewBox="0 0 34 34"><path d="M3 31l2-8A13.500 13.500 0 1111 29z" fill="#f1f5f0" stroke="#1f8a4c" strokeWidth="3" /><path d="M12 10c-3 4 4 13 11 13l2-3-4-3-2 2c-2-1-3-2-4-4l1-2-2-4z" fill="#1f8a4c" /></svg><Badge $bg="#1473b8">11</Badge></AppButton>
          <AppButton $dot><svg width="16" height="16" viewBox="0 0 32 32"><circle cx="16" cy="16" r="15" fill="#2a62dc" /><path d="M16 5l8 19-6-3-3-9-6 13z" fill="#fff" /></svg><Badge $bg="#d8404a">10</Badge></AppButton>
          <AppButton $dot><svg width="16" height="16" viewBox="0 0 32 32"><rect x="3" y="2" width="14" height="14" fill="#f6ece9" stroke="#b5483a" strokeWidth="2.400" strokeDasharray="4 3" /><path d="M16 6v14M14 17h14M15 25l13-11" stroke="#7c93a8" strokeWidth="2.200" /><circle cx="13" cy="27" r="3" fill="none" stroke="#3a8fd0" strokeWidth="2.200" /><circle cx="25" cy="24" r="3" fill="none" stroke="#3a8fd0" strokeWidth="2.200" /></svg></AppButton>
          <AppButton $dot><svg width="14" height="14" viewBox="0 0 28 28"><circle cx="14" cy="14" r="13.500" fill="#1d1b1c" /><path d="M13 13c-5-2-5-7-1-9M15 14c5-3 9 0 9 4M13 16c1 6-4 8-8 5" stroke="#a9a5a6" strokeWidth="2.400" fill="none" /></svg></AppButton>
        </Apps>
        <Clock>11:36<br />31/05/2024</Clock>
        <Tray>
          <svg width="17" height="18" viewBox="0 0 34 36"><path d="M10 3h12l-8 22H6c-5 0-6-4-4-9z" fill="#2f8fe0" /><path d="M22 3c3 0 4 4 5 8 5 0 6 5 4 10l-3 7H12l6-17z" fill="#c95fc0" /><path d="M10 3h12l-3 8h-8z" fill="#4cc08c" /><rect x="8" y="21" width="24" height="13" rx="2" fill="#f6c33a" /><path d="M12 31v-6h3v3h-3M18 31v-6h3v3l2 3M30 25h-4v6h4M26 28h3" fill="none" stroke="#333" strokeWidth="1.600" /></svg>
        </Tray>
      </Taskbar>

      <Cursor width="17" height="22" viewBox="0 0 34 44">
        <path d="M9 27V5c0-4 5-4 5 0v12c0-3 5-3 5 0v2c0-3 5-3 5 0v2c0-3 5-2 5 1v8c0 7-4 11-10 11-5 0-8-3-10-7l-5-7c-2-3 2-5 4-2z" fill="#fff" stroke="#333" strokeWidth="2.200" strokeLinejoin="round" />
        <path d="M14 17v6M19 18v6M24 20v5" stroke="#333" strokeWidth="2" />
      </Cursor>
    </Screen>
  );
}
